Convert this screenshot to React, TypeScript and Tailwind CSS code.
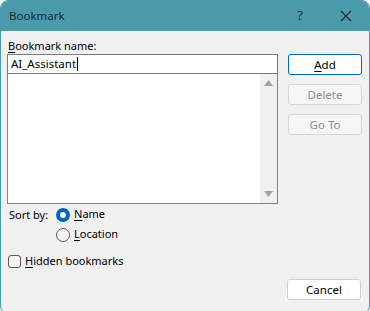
import React from "react";

const font = { fontFamily: '"Noto Sans", "Open Sans", sans-serif' };

const U = ({ c }: { c: string }) => <span className="underline underline-offset-2">{c}</span>;

export default function App() {
  return (
    <div className="w-[370px] h-[311px] bg-white overflow-hidden" style={font}>
      <div className="w-[370px] h-[314px] rounded-[8px] border border-[#4a9aab] overflow-hidden bg-[#f0f0f0] flex flex-col">
        <div className="h-[30px] bg-[#4a9aab] flex items-center pl-[8px] text-[11.5px] text-[#1b2a30]">
          <span className="flex-1">Bookmark</span>
          <span className="w-[46px] text-center text-[13px]">?</span>
          <span className="w-[46px] flex justify-center">
            <svg width="12" height="12" viewBox="0 0 12 12" stroke="#1b2a30" strokeWidth="1.1">
              <path d="M1 1 L11 11 M11 1 L1 11" />
            </svg>
          </span>
        </div>
        <div className="flex-1 relative text-[11px] text-black">
          <div className="flex px-[6px] pt-[6px] gap-[10px]">
            <div className="w-[271px] flex flex-col">
              <div className="h-[17px] leading-[17px] pl-[1px]"><U c="B" />ookmark name:</div>
              <div className="h-[20px] bg-white border border-[#7a7a7a] flex items-center pl-[3px] text-[11.5px]">
                AI_Assistant<span className="inline-block w-px h-[14px] bg-black ml-[1px]" />
              </div>
              <div className="h-[130px] bg-white border border-[#828282] border-t-0 flex">
                <div className="flex-1" />
                <div className="w-[17px] bg-[#f0f0f0] flex flex-col items-center justify-between py-[6px]">
                  <svg width="9" height="6" viewBox="0 0 9 6"><path d="M0 6 L4.5 0 L9 6Z" fill="#a3a3a3" /></svg>
                  <svg width="9" height="6" viewBox="0 0 9 6"><path d="M0 0 L4.5 6 L9 0Z" fill="#a3a3a3" /></svg>
                </div>
              </div>
            </div>
            <div className="flex flex-col gap-[9px] pt-[17px] w-[74px]">
              <button className="h-[21px] rounded-[3px] border border-[#0067c0] bg-white text-[11.5px]"><U c="A" />dd</button>
              <button className="h-[21px] rounded-[3px] border border-[#d6d6d6] bg-[#f5f5f5] text-[11.5px] text-[#8e8e8e]">Delete</button>
              <button className="h-[21px] rounded-[3px] border border-[#d6d6d6] bg-[#f5f5f5] text-[11.5px] text-[#8e8e8e]">Go To</button>
            </div>
          </div>
          <div className="flex pl-[8px] pt-[2px]">
            <span className="w-[47px] leading-[17px]">Sort by:</span>
            <div className="flex flex-col gap-[3px]">
              <label className="flex items-center gap-[4px] h-[17px]">
                <span className="w-[14px] h-[14px] rounded-full bg-[#0067c0] flex items-center justify-center">
                  <span className="w-[6px] h-[6px] rounded-full bg-white" />
                </span>
                <span><U c="N" />ame</span>
              </label>
              <label className="flex items-center gap-[4px] h-[17px]">
                <span className="w-[14px] h-[14px] rounded-full border border-[#5a5a5a] bg-[#f5f5f5]" />
                <span><U c="L" />ocation</span>
              </label>
            </div>
          </div>
          <label className="flex items-center gap-[4px] pl-[7px] pt-[10px] h-[17px] box-content">
            <span className="w-[13px] h-[13px] rounded-[3px] border border-[#5a5a5a] bg-[#f5f5f5]" />
            <span><U c="H" />idden bookmarks</span>
          </label>
          <div className="flex justify-end pr-[8px] pt-[9px]">
            <button className="w-[74px] h-[21px] rounded-[3px] border border-[#d0d0d0] bg-white text-[11.5px]">Cancel</button>
          </div>
        </div>
      </div>
    </div>
  );
}
